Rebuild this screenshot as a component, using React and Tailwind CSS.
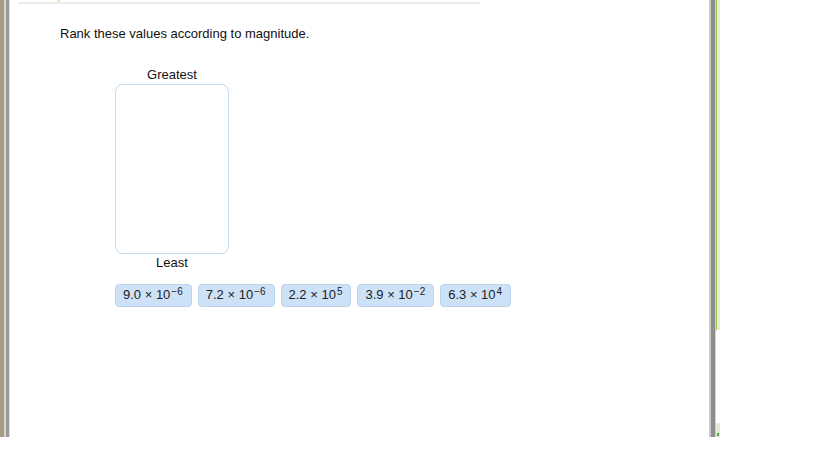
export default function App() {
  const values = [
    ["9.0", "−6"],
    ["7.2", "−6"],
    ["2.2", "5"],
    ["3.9", "−2"],
    ["6.3", "4"],
  ];

  return (
    <div className="w-[819px] h-[460px] bg-white" style={{ fontFamily: "'Liberation Sans', Arial, sans-serif" }}>
      <div className="flex h-[437px]">
        {/* left frame edge */}
        <div className="w-[4px] bg-[#a99b88]" />
        <div className="w-[2px] bg-[#d9d6d0]" />
        <div className="w-[3px] bg-[#9a9a9a]" />
        <div className="w-[1px] bg-[#dcdcdc]" />

        {/* main panel */}
        <div className="w-[699px] relative">
          <div className="absolute left-[8px] top-[2px] w-[462px] h-[2px] bg-[#ebebeb]" />
          <div className="absolute left-[47px] top-0 w-[3px] h-[2px] bg-[#f1e6a8]" />

          <div className="pl-[50px] pt-[24px] text-[13px] text-[#111]">
            Rank these values according to magnitude.
          </div>

          <div className="pl-[105px] pt-[23px] w-[219px] flex flex-col items-center text-[13px] text-[#111]">
            <div className="leading-[16px]">Greatest</div>
            <div className="mt-[1px] w-[114px] h-[170px] rounded-[8px] border border-[#c4dbf3]" />
            <div className="mt-[1px] leading-[16px]">Least</div>
          </div>

          <div className="pl-[105px] pt-[13px] flex gap-[6px]">
            {values.map(([m, e], i) => (
              <div
                key={i}
                className="h-[23px] px-[7px] flex items-center rounded-[4px] bg-[#cde1f7] border border-[#bcd4ee] text-[13px] text-[#222] whitespace-nowrap"
              >
                {m} × 10<sup className="text-[10px] relative -top-[3px] ml-[1px] mr-[1px]">{e}</sup>
              </div>
            ))}
          </div>
        </div>

        {/* right frame edge */}
        <div className="w-[2px] bg-[#c8c8c8]" />
        <div className="w-[4px] bg-[#8e8e8e]" />
        <div className="w-[1px] bg-[#cfcfcf]" />
        <div className="w-[4px] flex flex-col">
          <div className="h-[330px] flex">
            <div className="w-[1px] bg-[#8ed24a]" />
            <div className="w-[3px] bg-[#ece9da]" />
          </div>
          <div className="flex-1" />
          <div className="h-[14px] bg-[#e8e6d8] rounded-tl-[2px] relative">
            <div className="absolute left-[1px] bottom-[1px] w-[2px] h-[3px] bg-[#3cba2a]" />
          </div>
        </div>
        <div className="flex-1 bg-white" />
      </div>
    </div>
  );
}
